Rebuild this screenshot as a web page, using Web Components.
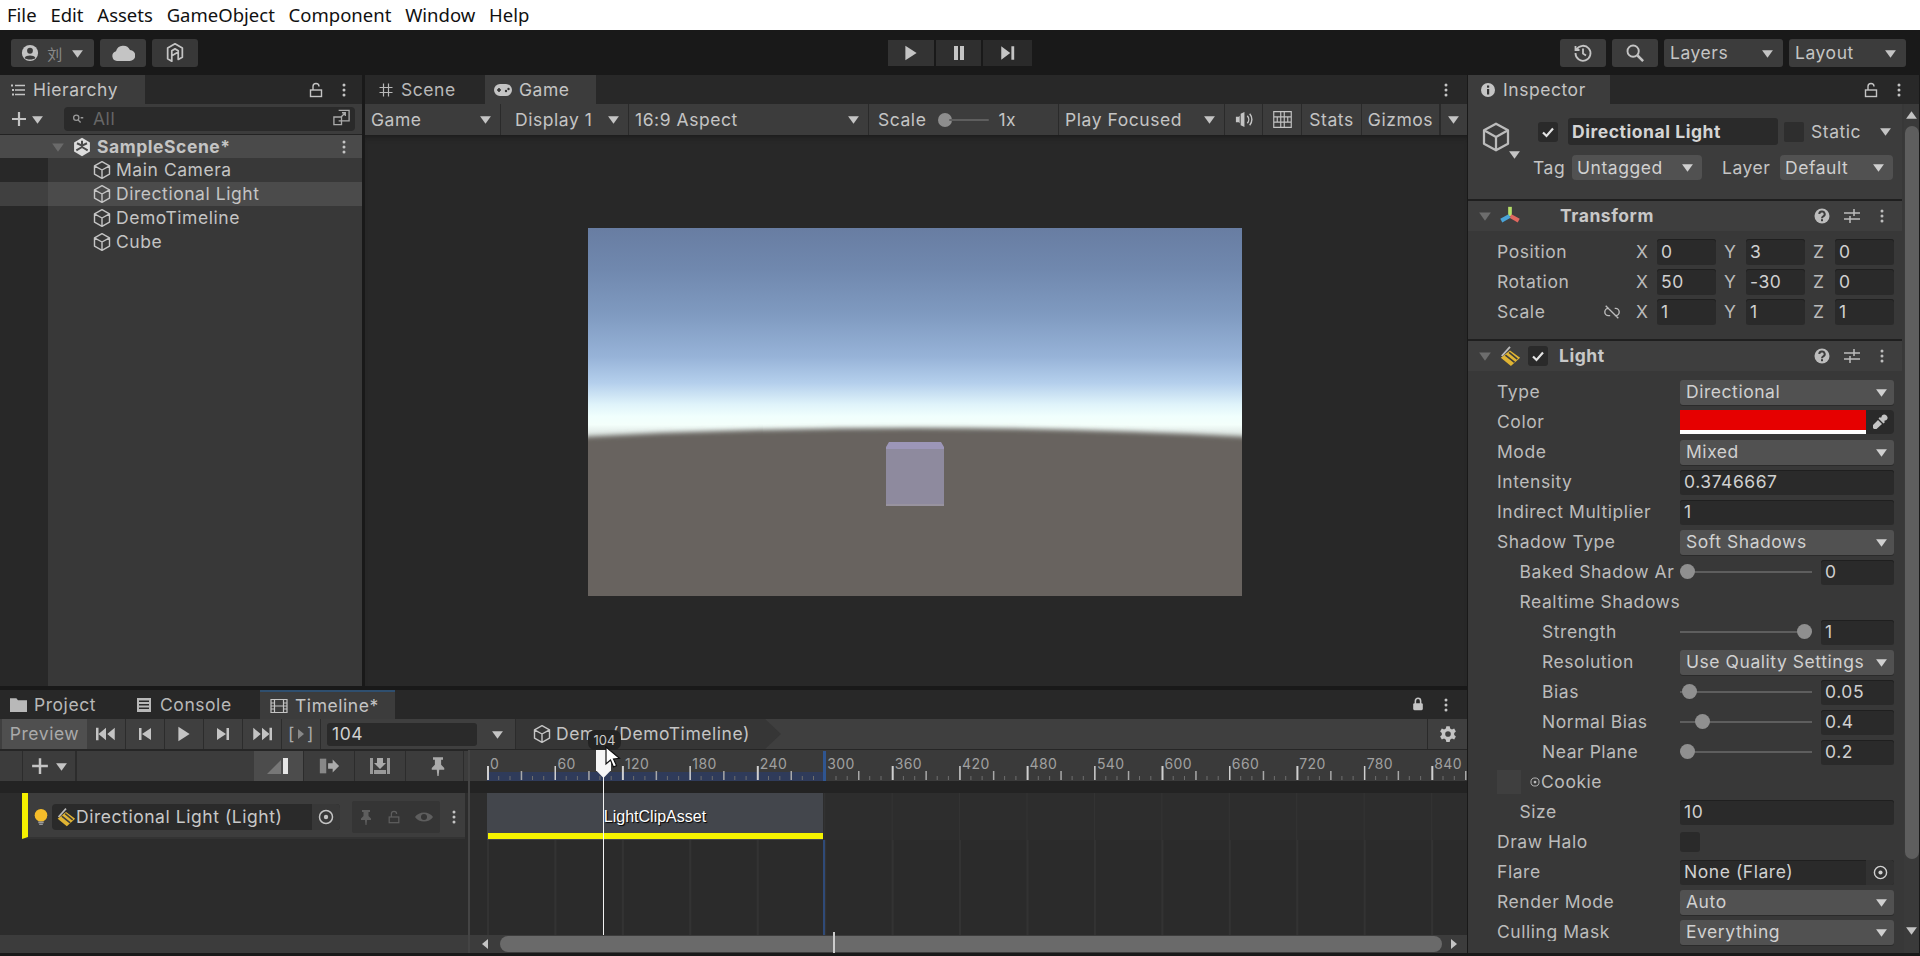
<!DOCTYPE html>
<html><head><meta charset="utf-8"><title>Unity</title>
<style>
html,body{margin:0;padding:0;background:#191919;width:1920px;height:956px;overflow:hidden}
body{font:17.500px/1 Inter,"Noto Sans CJK SC",sans-serif;color:#c4c4c4;letter-spacing:.55px}
</style></head><body>
<u-menu></u-menu>
<u-top></u-top>
<u-work></u-work>
<script>
const S=(w,b,o='')=>`<svg xmlns="http://www.w3.org/2000/svg" viewBox="0 0 ${w} ${w}" width="100%" height="100%" ${o}>${b}</svg>`;
const T='fill="none" stroke="currentColor"';
const F='fill="currentColor"';
const ICONS={
 list:S(16,`<path ${T} stroke-width="1.3" d="M5 3.500h10M5 8h10M5 12.500h10"/><path ${F} d="M1 2.500h2v2H1zM2 7h2v2H2zM2 11.500h2v2H2z"/>`),
 lockopen:S(16,`<rect x="2.500" y="8" width="11" height="6.500" ${T} stroke-width="1.400"/><path ${T} stroke-width="1.400" d="M5 8V4.500a3 3 0 0 1 6 0"/>`),
 lock:S(16,`<rect x="2.500" y="7" width="11" height="8" rx="1.500" ${F}/><path ${T} stroke-width="1.800" d="M5 8V4.500a3 3 0 0 1 6 0V8"/>`),
 dots:S(16,`<g ${F}><circle cx="8" cy="3" r="1.500"/><circle cx="8" cy="8" r="1.500"/><circle cx="8" cy="13" r="1.500"/></g>`),
 hash:S(16,`<path ${T} stroke-width="1.200" d="M5.500 1.500v13M10.500 1.500v13M1.500 5.500h13M1.500 10.500h13"/>`),
 pad:S(20,`<rect x="1" y="4" width="18" height="12" rx="6" ${F}/><path stroke="#333" stroke-width="1.600" d="M4 10h4M6 8v4"/><circle cx="13" cy="11" r="1.200" fill="#333"/><circle cx="15.500" cy="9" r="1.200" fill="#333"/>`),
 info:S(16,`<circle cx="8" cy="8" r="7" ${F}/><rect x="7" y="7" width="2.200" height="5.500" fill="#333"/><rect x="7" y="3.500" width="2.200" height="2.200" fill="#333"/>`),
 folder:S(16,`<path ${F} d="M0 2h6l1.500 2H16v11H0z"/>`),
 doc:S(16,`<path ${F} fill-rule="evenodd" d="M1 1h14v14H1zM3 3.500v1.500h10V3.500zM3 7v1.500h10V7zM3 10.500V12h10v-1.500z"/>`),
 film:S(18,`<path ${T} stroke-width="1.200" d="M1 2.500h16v13H1zM4.500 2.500v13M13.500 2.500v13M1 6h3.500M1 9h3.500M1 12h3.500M13.500 6H17M13.500 9H17M13.500 12H17M4.500 9h9"/>`),
 cube:S(24,`<path ${T} stroke-width="1.700" stroke-linejoin="round" d="M12 2l9 5v10l-9 5-9-5V7zM3 7l9 5 9-5M12 12v10"/>`),
 search:S(16,`<circle cx="6.500" cy="6.500" r="4.500" ${T} stroke-width="1.500"/><path ${T} stroke-width="2" d="M10 10l4.500 4.500"/>`),
 searchs:S(16,`<circle cx="6" cy="6.500" r="3" ${T} stroke-width="1.500"/><path ${T} stroke-width="1.600" d="M8 9l3 3M11 6.500h3"/>`),
 ssearch:S(20,`<path ${T} stroke-width="1.400" d="M7 2.500h11v11H7M2 9.500h8v8H2zM9 10l5-5M10.500 5H14v3.500"/>`),
 unity:S(24,`<path ${F} d="M12 1l9.500 5.500v11L12 23l-9.500-5.500v-11z"/><path stroke="#4a4a4a" stroke-width="2.400" fill="none" d="M12 12V4.500M12 12l-6.800 4M12 12l6.800 4M6 7.500l6 3 6-3"/>`),
 user:S(20,`<circle cx="10" cy="10" r="9" ${F}/><circle cx="10" cy="7.500" r="3.200" fill="#3c3c3c"/><path fill="#3c3c3c" d="M4 15.500c1.500-3.500 10.500-3.500 12 0-2 2.200-10 2.200-12 0z"/>`),
 cloud:S(24,`<path ${F} d="M6 20a5 5 0 0 1-1-9.800A7.500 7.500 0 0 1 19 9a5.500 5.500 0 0 1-.5 11z"/>`),
 plastic:S(24,`<path ${T} stroke-width="1.900" stroke-linejoin="round" d="M12 2l8 4.600v10L15.500 19V9.500L12 7.500 8.500 9.500V21L4 18.400V6.600zM8.500 15l7-4"/>`),
 history:S(20,`<path ${T} stroke-width="1.800" d="M3.500 6.500A7.500 7.500 0 1 1 2.500 10M2.500 3v4h4M10 5.500V10.500l3 2"/>`),
 play:S(16,`<path ${F} d="M3 1.500l10 6.500-10 6.500z"/>`),
 pause:S(16,`<path ${F} d="M3 1h4v14H3zM9 1h4v14H9z"/>`),
 step:S(16,`<path ${F} d="M2 2l8 6-8 6zM11 2h2.500v12H11z"/>`),
 first:S(16,`<path ${F} d="M0 3h2v10H0zM8 3v10L2 8zM15 3v10L9 8z"/>`),
 prev:S(16,`<path ${F} d="M2 2h2.500v12H2zM14 2v12L5 8z"/>`),
 next:S(16,`<path ${F} d="M2 2l9 6-9 6zM11.500 2H14v12h-2.500z"/>`),
 last:S(16,`<path ${F} d="M1 3l6 5-6 5zM8 3l6 5-6 5zM14 3h2v10h-2z"/>`),
 gear:S(16,`<path ${F} fill-rule="evenodd" d="M6.500 1h3l.4 2 1.600.9 2-.7 1.500 2.600-1.500 1.300v1.800l1.500 1.300-1.500 2.600-2-.7-1.600.9-.4 2h-3l-.4-2-1.600-.9-2 .7L1 10.200l1.500-1.300V7.100L1 5.800l1.500-2.600 2 .7 1.600-.9zM8 5.500a2.500 2.500 0 1 0 0 5 2.500 2.500 0 0 0 0-5z"/>`),
 help:S(16,`<circle cx="8" cy="8" r="7.500" ${F}/><path fill="none" stroke="#3e3e3e" stroke-width="2" d="M5.300 6a2.700 2.500 0 1 1 3.900 2.300C8.200 8.800 8 9.400 8 10.300"/><rect x="7" y="11.200" width="2" height="2" fill="#3e3e3e"/>`),
 sliders:S(16,`<path ${T} stroke-width="1.500" d="M0 5h16M0 11h16M10 1v7M6 8v7"/>`),
 target:S(16,`<circle cx="8" cy="8" r="6.500" ${T} stroke-width="1.500"/><circle cx="8" cy="8" r="2.200" ${F}/>`),
 dropper:S(16,`<path ${F} d="M10 1.500a2.300 2.300 0 0 1 4.500 4.500l-2.500 1 1 1-1.500 1.500-5-5L8 3l1 1zM6 6l4 4-5.500 5H2l-1 -1V11z"/>`),
 unlink:S(20,`<path ${T} stroke-width="1.500" d="M7 6H6a4 4 0 0 0 0 8h2M13 6h1a4 4 0 0 1 0 8h-1M3 3l14 14"/>`),
 bulb:S(20,`<circle cx="10" cy="8" r="7" fill="#f5bd2a"/><path fill="#9b9b9b" d="M7 15h6v2H7zM8 17.500h4V19H8z"/>`),
 pin:S(16,`<path ${F} d="M4 1h8v2h-1.500v4L13 9.500V11H9l-.5 5h-1L7 11H3V9.500L5.500 7V3H4z"/>`),
 eye:S(20,`<path ${F} d="M1 10c4-6 14-6 18 0-4 6-14 6-18 0z"/><circle cx="10" cy="10" r="3" fill="#353535"/>`),
 ramp:S(24,`<path fill="#777" d="M0 20L14 6v14z"/><rect x="16" y="4" width="5" height="16" fill="#e6e6e6"/>`),
 pushr:S(24,`<path fill="#888" d="M2 4h7v16H2z"/><path ${F} d="M11 9h5V5l7 7-7 7v-4h-5z"/>`),
 pushd:S(24,`<path fill="#999" d="M2 4h3v16H2zM19 4h3v16h-3zM6 16h12v4H6z"/><path ${F} d="M9 4h6v5h3l-6 6-6-6h3z"/>`),
 cursor:S(24,`<path fill="#fff" stroke="#111" stroke-width="1.200" d="M2 1l0 17 4.500-4 3 7 3-1.400-3-6.600 6-.6z"/>`),
 tri:S(12,`<path ${F} d="M1 3h10L6 10z"/>`),
 triu:S(12,`<path ${F} d="M1 9h10L6 2z"/>`),
 tril:S(12,`<path ${F} d="M9 1v10L3 6z"/>`),
 trir:S(12,`<path ${F} d="M3 1v10l6-5z"/>`),
 plus:S(16,`<path ${T} stroke-width="2.200" d="M8 1v14M1 8h14"/>`),
 transform:S(24,`<path stroke="#b6e06a" stroke-width="4" d="M12 12V2"/><path stroke="#e0675f" stroke-width="4.500" d="M12.500 12l9 5"/><path stroke="#4aa4d8" stroke-width="4.500" d="M11.500 12l-9 5"/>`),
 light:S(24,`<path fill="#e0b433" d="M12 6l11 8-10 9L2 14z"/><path stroke="#3c3c3c" stroke-width="1.800" d="M7 11l10 8M11 8l9 7.500"/><path stroke="#bcbcbc" stroke-width="2" d="M3 12l9-10"/>`),
 speaker:S(20,`<path ${F} d="M2 7h3l1 -1v8l-1-1H2zM7 4l4-2v16l-4-2z"/><path ${T} stroke-width="1.500" d="M14 6a6 6 0 0 1 0 8M16.500 4a9 9 0 0 1 0 12"/>`),
 keys:S(24,`<path ${T} stroke-width="1.300" d="M2 3h20v18H2zM2 9h20M2 15h20M6 9v6M10 3v18M14 3v18M18 9v6"/>`)
};
function def(name,css,html,init){
 customElements.define(name,class extends HTMLElement{
  constructor(){super();const r=this.attachShadow({mode:'open'});
   r.innerHTML=`<style>${css}</style>`+(typeof html==='function'?html(this):html);}
  connectedCallback(){if(init&&!this._i){this._i=1;init(this,this.shadowRoot)}}
 });
}
def('u-icon',':host{display:inline-block;flex:none;line-height:0;width:var(--s,16px);height:var(--s,16px)}svg{display:block}','',(e,r)=>{
 const s=e.getAttribute('s');if(s)e.style.setProperty('--s',s+'px');
 r.innerHTML+=ICONS[e.getAttribute('n')]||'';
});
const I=(n,s,st='')=>`<u-icon n="${n}" s="${s}" style="${st}"></u-icon>`;

def('u-menu',`:host{display:flex;height:30px;background:#fff;color:#111;font:18.500px/30px "Noto Sans",sans-serif;letter-spacing:0;padding-left:7px;box-sizing:border-box;gap:13.800px}span{display:block}`,
 ['File','Edit','Assets','GameObject','Component','Window','Help'].map(t=>`<span>${t}</span>`).join(''));

def('u-btn',`:host{display:flex;align-items:center;justify-content:center;gap:6px;height:28px;box-sizing:border-box;background:var(--bg,#3c3c3c);border-radius:3px;color:#c4c4c4;white-space:nowrap}::slotted(*){flex:none}`,'<slot></slot>');
def('u-top',`:host{display:flex;height:45px;align-items:flex-start;padding-top:9px;box-sizing:border-box;background:#191919}
 .a{display:flex;gap:6px;margin-left:11px}.p{display:flex;gap:2px;margin-left:690px;margin-top:1px}.r{display:flex;gap:6px;margin-left:528px}
 .dd{justify-content:space-between;padding:0 9px 0 6px}`,
 `<div class="a"><u-btn style="width:83px;gap:8px;color:#c4c4c4">${I('user',18)}<span style="font-size:15px;font-family:'Noto Sans CJK SC';color:#8a8a8a">刘</span>${I('tri',13)}</u-btn>
  <u-btn style="width:46px">${I('cloud',24)}</u-btn><u-btn style="width:46px;--bg:#383838">${I('plastic',22)}</u-btn></div>
  <div class="p"><u-btn style="width:46px;height:26px;--bg:#333;border-radius:0">${I('play',18)}</u-btn><u-btn style="width:45px;height:26px;--bg:#2f2f2f;border-radius:0">${I('pause',16)}</u-btn><u-btn style="width:49px;height:26px;--bg:#2a2a2a;border-radius:0">${I('step',18)}</u-btn></div>
  <div class="r"><u-btn style="width:46px">${I('history',20)}</u-btn><u-btn style="width:46px">${I('search',20)}</u-btn>
  <u-btn class="dd" style="width:119px"><span>Layers</span>${I('tri',13)}</u-btn><u-btn class="dd" style="width:117px"><span>Layout</span>${I('tri',13)}</u-btn></div>`);

def('u-tab',`:host{display:flex;align-items:center;gap:7px;height:29px;box-sizing:border-box;color:#b8b8b8;background:#282828;padding-left:10px}
 :host([on]){background:#3c3c3c;color:#c4c4c4}:host([blue]){border-top:2px solid #2f4f6f}`,'<slot></slot>');
def('u-strip',`:host{display:flex;height:29px;background:#282828;align-items:center}.end{margin-left:auto;display:flex;gap:12px;padding-right:10px;color:#c4c4c4}`,
 `<slot></slot><div class="end"><slot name="end"></slot></div>`);

def('u-hrow',`:host{display:flex;align-items:center;height:24px;background:linear-gradient(90deg,#282828 0 48px,#383838 48px);padding-left:92px;gap:4px;box-sizing:border-box}
 :host([sel]){background:linear-gradient(90deg,#404040 0 48px,#4b4b4b 48px)}`,'<slot></slot>');
def('u-hier',`:host{display:flex;flex-direction:column;width:362px;background:linear-gradient(90deg,#282828 0 48px,#383838 48px)}
 .tb{display:flex;align-items:center;height:31px;background:#3c3c3c;color:#c4c4c4;border-bottom:1px solid #232323;box-sizing:border-box;padding-left:11px}
 .s{display:flex;align-items:center;margin-left:20px;width:291px;height:24px;border-radius:4px;background:#2a2a2a;box-sizing:border-box;padding:0 4px 0 7px;color:#666;gap:8px}
 .sc{display:flex;align-items:center;height:23px;background:#4a4a4a;font-weight:700;gap:5px;color:#c4c4c4}`,
 `<u-strip><u-tab on style="width:145px">${I('list',16)}<span>Hierarchy</span></u-tab>
  <u-icon slot="end" n="lockopen" s="16"></u-icon><u-icon slot="end" n="dots" s="16"></u-icon></u-strip>
 <div class="tb">${I('plus',16)}<u-icon n="tri" s="13" style="margin-left:4px"></u-icon>
  <div class="s">${I('searchs',14,'color:#999')}<span style="flex:1">All</span><span style="color:#aaa">${I('ssearch',19)}</span></div></div>
 <div class="sc"><u-icon n="tri" s="14" style="margin-left:51px;color:#6a6a6a"></u-icon>${I('unity',20,'color:#ddd;margin-left:2px')}<span style="flex:1">SampleScene*</span>${I('dots',16,'margin-right:10px')}</div>
 <u-hrow>${I('cube',20)}<span>Main Camera</span></u-hrow>
 <u-hrow sel>${I('cube',20)}<span>Directional Light</span></u-hrow>
 <u-hrow>${I('cube',20)}<span>DemoTimeline</span></u-hrow>
 <u-hrow>${I('cube',20)}<span>Cube</span></u-hrow>`);

def('u-seg',`:host{display:flex;align-items:center;justify-content:space-between;height:100%;box-sizing:border-box;border-right:1px solid #2a2a2a;padding:0 8px 0 6px;white-space:nowrap;color:#c4c4c4;flex:none}`,'<slot></slot>');
def('u-gameview',`:host{display:block;width:654px;height:368px;flex:none}svg{display:block}`,
 `<svg width="654" height="368" viewBox="0 0 654 368"><defs>
 <linearGradient id="g" x1="0" y1="0" x2="0" y2="1">
 <stop offset="0" stop-color="#687da2"/><stop offset=".19" stop-color="#7088ae"/><stop offset=".4" stop-color="#7f9ac0"/><stop offset=".6" stop-color="#97b3d8"/><stop offset=".72" stop-color="#b4cfec"/><stop offset=".82" stop-color="#dff3fa"/><stop offset=".875" stop-color="#f0fffd"/><stop offset=".915" stop-color="#f4fffb"/><stop offset="1" stop-color="#c8cfcc"/></linearGradient>
 <radialGradient id="d" cx=".5" cy="0" r=".5"><stop offset="0" stop-color="#566a86" stop-opacity=".7"/><stop offset="1" stop-color="#566a86" stop-opacity="0"/></radialGradient>
 <filter id="b" x="-5%" y="-10%" width="110%" height="120%"><feGaussianBlur stdDeviation="0 2.500"/></filter></defs>
 <rect width="654" height="215" fill="url(#g)"/><ellipse cx="327" cy="0" rx="400" ry="110" fill="url(#d)"/>
 <path filter="url(#b)" fill="#68635e" d="M-40 211Q327 189 694 211V420H-40z"/>
 <path fill="#8e8a9e" d="M298 219h58v59h-58z"/><path fill="#9c96b8" d="M301 214h52l3 5v2h-58v-2z"/><path fill="#98939f" d="M298 276h58v2h-58z"/></svg>`);
def('u-game',`:host{display:flex;flex-direction:column;width:1102px}
 .tb{display:flex;align-items:center;height:31px;background:#3c3c3c;box-sizing:border-box;flex:none}
 .v{flex:1;background:#282828;display:flex;align-items:center;justify-content:center;padding:3px 2px 0 0;box-sizing:border-box;box-shadow:inset 0 6px 6px -5px #181818}
 .tr{width:40px;height:2px;background:#5e5e5e;border-radius:1px;margin-left:-3px}
 .k{width:14px;height:14px;border-radius:50%;background:#8d8d8d;margin-left:12px}`,
 `<u-strip><u-tab style="width:120px;padding-left:13px">${I('hash',16)}<span>Scene</span></u-tab><u-tab on style="width:111px;gap:6px;padding-left:8px">${I('pad',20)}<span>Game</span></u-tab>
  <u-icon slot="end" n="dots" s="16" style="margin-right:3px"></u-icon></u-strip>
 <div class="tb">
  <u-seg style="width:136px"><span>Game</span>${I('tri',13)}</u-seg>
  <u-seg style="width:128px;padding-left:14px"><span>Display 1</span>${I('tri',13)}</u-seg>
  <u-seg style="width:240px"><span>16:9 Aspect</span>${I('tri',13)}</u-seg>
  <u-seg style="width:190px;justify-content:flex-start;padding-left:9px"><span>Scale</span><i class="k"></i><i class="tr"></i><span style="margin-left:9px">1x</span></u-seg>
  <u-seg style="width:166px"><span>Play Focused</span>${I('tri',13)}</u-seg>
  <u-seg style="width:38px;padding:0;justify-content:center">${I('speaker',19)}</u-seg>
  <u-seg style="width:39px;padding:0;justify-content:center">${I('keys',21)}</u-seg>
  <u-seg style="width:60px;padding:0;justify-content:center"><span>Stats</span></u-seg>
  <u-seg style="width:78px;padding:0;justify-content:center"><span>Gizmos</span></u-seg>
  <u-seg style="width:26px;padding:0;justify-content:center;border:0;border-left:1px solid #2a2a2a">${I('tri',13)}</u-seg>
 </div>
 <div class="v"><u-gameview></u-gameview></div>`);

def('u-field',`:host{display:flex;align-items:center;justify-content:space-between;height:25px;box-sizing:border-box;border-radius:3px;white-space:nowrap;overflow:hidden;color:#d0d0d0}
 :host([k=in]){background:#2a2a2a;padding:0 4px;box-shadow:inset 0 1px 0 #1f1f1f}
 :host([k=dd]){background:#515151;padding:0 6px;box-shadow:0 1px 0 #2b2b2b}`,'<slot></slot>');
def('u-prop',`:host{display:flex;align-items:center;height:30px;box-sizing:border-box;padding-left:calc(29px + var(--ind,0)*22.500px);color:#bcbcbc}
 .l{flex:none;width:calc(183px - var(--ind,0)*22.500px);white-space:nowrap;overflow:hidden}.c{width:214px;flex:none;display:flex;align-items:center}
 .tr{position:relative;width:132px;height:2px;background:#5e5e5e;margin-right:9px;flex:none}
 .kn{position:absolute;top:-7px;width:15px;height:15px;border-radius:50%;background:#8f8f8f}
 u-field{flex:1}`,e=>{
  const a=n=>e.getAttribute(n);const ind=a('ind')||0;e.style.setProperty('--ind',ind);
  const k=a('k'),v=a('v')||'';let c='';
  if(k=='dd')c=`<u-field k="dd"><span>${v}</span>${I('tri',13)}</u-field>`;
  if(k=='in')c=`<u-field k="in"><span>${v}</span></u-field>`;
  if(k=='sl')c=`<div class="tr"><i class="kn" style="left:${a('p')}px"></i></div><u-field k="in"><span>${v}</span></u-field>`;
  if(k=='col')c=`<div style="width:186px;height:24px;background:linear-gradient(#e60000 0 20px,#fff 20px)"></div><div style="width:28px;height:24px;background:#2a2a2a;border-radius:0 4px 4px 0;display:flex;align-items:center;justify-content:center;color:#c4c4c4">${I('dropper',16)}</div>`;
  if(k=='chk')c=`<div style="width:20px;height:20px;background:#2a2a2a;border-radius:3px"></div>`;
  if(k=='obj')c=`<u-field k="in" style="padding-right:0"><span>${v}</span><span style="width:28px;height:25px;background:#323232;display:flex;align-items:center;justify-content:center">${I('target',15)}</span></u-field>`;
  return `<div class="l"><slot></slot></div>${k?`<div class="c">${c}</div>`:''}`;
 });
def('u-vec',`:host{display:flex;align-items:center;height:30px;padding-left:29px;box-sizing:border-box;color:#bcbcbc}
 .l{width:135px;flex:none;display:flex;justify-content:space-between;padding-right:11px;box-sizing:border-box;align-items:center}
 .x{flex:none;color:#bbb;padding-left:4px;box-sizing:border-box}
 u-field{width:59px;height:26px;flex:none}`,e=>{
  const [x,y,z]=e.getAttribute('v').split(',');
  return `<div class="l"><span>${e.getAttribute('l')}</span>${e.hasAttribute('link')?I('unlink',18):''}</div>
  <span class="x" style="width:25px">X</span><u-field k="in"><span>${x}</span></u-field>
  <span class="x" style="width:30px;padding-left:8px">Y</span><u-field k="in"><span>${y}</span></u-field>
  <span class="x" style="width:30px;padding-left:8px">Z</span><u-field k="in"><span>${z}</span></u-field>`;
 });
def('u-comp',`:host{display:flex;align-items:center;height:30px;background:#3e3e3e;border-top:2px solid #1f1f1f;box-sizing:content-box;font-weight:700;color:#c8c8c8;padding-right:12px;gap:0}
 .a{color:#6d6d6d;margin-left:10px}.e{margin-left:auto;display:flex;gap:14px;color:#bdbdbd}`,e=>`<u-icon n="tri" s="14" class="a"></u-icon><slot></slot><div class="e">${I('help',16)}${I('sliders',16)}${I('dots',16)}</div>`);
def('u-check',`:host{display:flex;align-items:center;justify-content:center;width:20px;height:20px;background:#2a2a2a;border-radius:3px;flex:none}svg{width:14px;height:14px}`,
 `<svg viewBox="0 0 14 14"><path fill="none" stroke="#e4e4e4" stroke-width="2.200" d="M2 7.500l3.500 3.500L12 3.500"/></svg>`);
def('u-inspector',`:host{display:flex;flex-direction:column;width:451px;margin-left:1px;height:878px}
 .m{display:flex;flex:1;min-height:0;background:#383838}.c{flex:1;min-width:0;padding-bottom:0}
 .sb{width:15px;margin-left:2px;background:#3a3a3a;display:flex;flex-direction:column;align-items:center;flex:none;color:#c4c4c4;box-sizing:border-box;padding-top:5px}
 .th{width:14px;height:733px;margin:4px 0 65px;border-radius:7px;background:#5e5e5e;flex:none}
 .h{height:95px;background:#3c3c3c;box-sizing:border-box;position:relative;padding:14px 0 0 12px}
 .h1,.h2{display:flex;align-items:center}.h1{height:27px}
 .nm{display:flex;align-items:center;width:210px;height:27px;background:#2a2a2a;border-radius:3px;margin-left:10px;padding-left:4px;box-sizing:border-box;font-weight:700;color:#d4d4d4;white-space:nowrap}
 .st{width:20px;height:20px;background:#2e2e2e;border-radius:2px;margin:0 7px 0 6px}
 .dd{display:flex;align-items:center;justify-content:space-between;height:25px;background:#515151;border-radius:4px;box-sizing:border-box;padding:0 8px 0 5px;color:#d0d0d0}`,
 `<u-strip style="background:#282828"><u-tab on style="width:142px;padding-left:12px;gap:7px">${I('info',16)}<span>Inspector</span></u-tab>
  <u-icon slot="end" n="lockopen" s="16"></u-icon><u-icon slot="end" n="dots" s="16" style="margin-right:2px"></u-icon></u-strip>
 <div class="m"><div class="c">
  <div class="h"><div class="h1">${I('cube',32,'color:#bcbcbc;margin-top:10px')}<u-check style="margin-left:26px"></u-check><div class="nm">Directional Light</div><div class="st"></div><span>Static</span>${I('tri',13,'margin-left:18px')}</div>
   <div class="h2" style="margin-top:10px"><u-icon n="tri" s="13" style="position:absolute;left:40px;top:44px"></u-icon><span style="margin-left:53px;width:33px">Tag</span><div class="dd" style="width:130px;margin-left:6px"><span>Untagged</span>${I('tri',13)}</div><span style="margin-left:20px;width:50px">Layer</span><div class="dd" style="width:113px;margin-left:8px"><span>Default</span>${I('tri',13)}</div></div></div>
  <u-comp>${I('transform',22,'margin-left:7px')}<span style="margin-left:39px">Transform</span></u-comp>
  <div style="padding-top:6px"><u-vec l="Position" v="0,3,0"></u-vec><u-vec l="Rotation" v="50,-30,0"></u-vec><u-vec l="Scale" v="1,1,1" link></u-vec></div><div style="height:12px"></div>
  <u-comp>${I('light',22,'margin-left:7px')}<u-check style="margin-left:7px"></u-check><span style="margin-left:11px">Light</span></u-comp>
  <div style="padding-top:6px">
  <u-prop k="dd" v="Directional">Type</u-prop><u-prop k="col">Color</u-prop><u-prop k="dd" v="Mixed">Mode</u-prop>
  <u-prop k="in" v="0.3746667">Intensity</u-prop><u-prop k="in" v="1">Indirect Multiplier</u-prop><u-prop k="dd" v="Soft Shadows">Shadow Type</u-prop>
  <u-prop ind="1" k="sl" p="0" v="0">Baked Shadow Ar</u-prop><u-prop ind="1">Realtime Shadows</u-prop>
  <u-prop ind="2" k="sl" p="117" v="1">Strength</u-prop><u-prop ind="2" k="dd" v="Use Quality Settings">Resolution</u-prop>
  <u-prop ind="2" k="sl" p="2" v="0.05">Bias</u-prop><u-prop ind="2" k="sl" p="15" v="0.4">Normal Bias</u-prop><u-prop ind="2" k="sl" p="0" v="0.2">Near Plane</u-prop>
  <u-cookie></u-cookie>
  <u-prop ind="1" k="in" v="10">Size</u-prop><u-prop k="chk">Draw Halo</u-prop><u-prop k="obj" v="None (Flare)">Flare</u-prop><u-prop k="dd" v="Auto">Render Mode</u-prop><u-prop k="dd" v="Everything">Culling Mask</u-prop></div>
 </div><div class="sb">${I('triu',13)}<div class="th"></div>${I('tri',13)}</div></div>`);
def('u-cookie',`:host{display:flex;align-items:center;height:30px;padding-left:29px;color:#bcbcbc}i{width:24px;height:24px;background:#3f3f3f;display:block}`,`<i></i>${I('target',10,'margin:0 1px 0 9px')}<span>Cookie</span>`);

def('u-tbtn',`:host{display:flex;align-items:center;justify-content:center;height:100%;width:39px;box-sizing:border-box;border-right:1px solid #2c2c2c;color:#c4c4c4;flex:none}`,'<slot></slot>');
def('u-ruler',`:host{display:block;position:relative;height:31px;background:#3a3a3a;overflow:hidden}
 svg{position:absolute;left:0;top:0}.lb{display:flex;padding-left:17px;position:relative;height:31px}
 .lb span{flex:none;width:67.450px;box-sizing:border-box;padding:7px 0 0 3px;font-size:14px;color:#a0a0a0;letter-spacing:.4px}`,e=>{
  let s='<rect x="17" y="22" width="337" height="9" fill="#2f3b5a"/>';
  for(let x=17,i=0;x<1000;x+=67.45/6,i++){
   const m=i%6==0,h=i%3==0;const y=m?16:h?21:26;
   s+=`<rect x="${x.toFixed(1)}" y="${y}" width="${m||h?(i%12==0?2:1.500):1}" height="${31-y-1}" fill="${m?'#cfcfcf':h?'#a8a8a8':'#6e6e6e'}"/>`;}
  s+='<rect x="353" y="1" width="3" height="30" fill="#2f5590"/>';
  let l='';for(let i=0;i<=14;i++)l+=`<span>${i*60}</span>`;
  return `<svg width="997" height="31">${s}</svg><div class="lb">${l}</div>`;
 });
def('u-timeline',`:host{display:flex;flex-direction:column;position:relative;height:266px;width:1467px;margin-top:4px;flex:none;background:#282828}
 .t1{display:flex;align-items:center;height:31px;background:#3f3f3f;border-bottom:1px solid #262626;box-sizing:border-box;flex:none}
 .pv{display:flex;align-items:center;justify-content:center;width:85px;height:100%;margin-left:2px;background:#4f4f4f;color:#aaa;flex:none}
 .in{display:flex;align-items:center;width:150px;height:23px;margin-left:6px;background:#2a2a2a;border-radius:3px;padding-left:5px;box-sizing:border-box;color:#d0d0d0}
 .crumb{display:flex;align-items:center;gap:4px;height:100%;width:265px;background:#363636;clip-path:polygon(0 0,94% 0,100% 50%,94% 100%,0 100%);padding-left:16px;box-sizing:border-box;color:#c4c4c4;flex:none;white-space:nowrap}
 .gear{margin-left:auto;width:40px;height:100%;border-left:1px solid #2a2a2a;display:flex;align-items:center;justify-content:center;color:#c4c4c4;box-sizing:border-box}
 .b{flex:1;display:flex;min-height:0}
 .left{width:468px;flex:none;border-right:2px solid #444;box-sizing:content-box;background:#2c2c2c;display:flex;flex-direction:column}
 .add{height:31px;background:#3c3c3c;display:flex;align-items:center;box-sizing:border-box;flex:none;border-top:1px solid #262626}
 .sep{width:1px;height:100%;background:#2c2c2c;flex:none}
 .band{height:12px;background:#232323;flex:none}
 .hd{height:46px;margin-left:22px;background:#3d3d3d;display:flex;align-items:center;flex:none;box-sizing:border-box;border-left:6px solid #f5f000;width:443px;border-bottom:2px solid #333;padding-top:3px}
 .ob{display:flex;align-items:center;width:288px;height:26px;background:#2a2a2a;border-radius:4px;box-sizing:border-box;white-space:nowrap;overflow:hidden;color:#c8c8c8;flex:none}
 .grp{display:flex;align-items:center;justify-content:space-around;width:88px;height:32px;background:#353535;margin-left:12px;color:#5e5e5e;border-radius:2px;flex:none}
 .r{flex:1;min-width:0;display:flex;flex-direction:column;background-color:#2b2b2b;background-image:linear-gradient(90deg,#333 2px,transparent 2px);background-size:67.450px 100%;background-position:17px 0}
 .tr{height:47px;background:#2d2d2d;display:flex;flex:none;padding-left:17px;background-image:linear-gradient(90deg,#333 1px,transparent 1px);background-size:67.450px 100%;background-position:17px 0}
 .clip{position:relative;width:336px;height:100%;background:#43464c;display:flex;flex-direction:column;align-items:center;box-sizing:border-box;color:#fff}
 .clip span{font:16px/1 "Liberation Sans",sans-serif;letter-spacing:0;margin-top:16px;text-shadow:1px 1px 1px #000}
 .clip i{position:absolute;left:1px;right:0;top:40px;height:6px;background:#f5f400}
 .end{flex:1;position:relative}.bar{position:absolute;left:353px;top:0;bottom:0;width:2px;background:#2f4a78}
 .sc{height:18px;display:flex;flex:none;align-items:center;background:#3c3c3c;position:relative}
 .sl{height:18px;background:#3c3c3c;flex:none}
 .th{position:absolute;left:30px;width:942px;height:16px;top:1px;background:#6a6a6a;border-radius:8px}
 .tick{position:absolute;left:363px;top:-3px;width:2px;height:21px;background:#ccc}
 .cl{height:3px;background:#191919;flex:none}
 .ph{position:absolute;left:603px;top:85px;width:1px;height:160px;background:#f2f2f2}
 .phh{position:absolute;left:596px;top:60px;width:15px;height:28px;background:#f6f6f6;clip-path:polygon(0 0,100% 0,100% 72%,50% 100%,0 72%)}
 .tip{position:absolute;left:588px;top:40px;width:33px;height:20px;border-radius:7px;background:#232323;color:#ccc;font-size:13px;display:flex;align-items:center;justify-content:center;letter-spacing:0}
 .cur{position:absolute;left:604px;top:56px}`,
 `<u-strip><u-tab style="width:130px;padding-left:10px">${I('folder',17)}<span>Project</span></u-tab><u-tab style="width:130px;padding-left:6px;gap:8px">${I('doc',16)}<span>Console</span></u-tab><u-tab on blue style="width:135px;padding-left:10px">${I('film',18)}<span>Timeline*</span></u-tab>
  <u-icon slot="end" n="lock" s="14" style="color:#c4c4c4;margin-right:1px"></u-icon><u-icon slot="end" n="dots" s="16" style="margin-right:3px"></u-icon></u-strip>
 <div class="t1"><div class="pv">Preview</div><u-tbtn>${I('first',20)}</u-tbtn><u-tbtn>${I('prev',16)}</u-tbtn><u-tbtn>${I('play',18)}</u-tbtn><u-tbtn>${I('next',16)}</u-tbtn><u-tbtn>${I('last',20)}</u-tbtn>
  <u-tbtn style="color:#aaa">[${I('trir',12,'color:#888')}]</u-tbtn><div class="in">104</div><u-tbtn style="width:39px;padding-left:2px">${I('tri',13)}</u-tbtn>
  <div class="crumb">${I('cube',20)}<span>Demo (DemoTimeline)</span></div><div class="gear">${I('gear',18)}</div></div>
 <div class="b"><div class="left"><div class="add"><i style="width:22px"></i><i class="sep"></i><u-tbtn style="width:53px">${I('plus',18)}${I('tri',13,'margin-left:6px')}</u-tbtn><i class="sep"></i>
   <u-tbtn style="width:50px;margin-left:177px;background:#4c4c4c;color:#bbb">${I('ramp',24)}</u-tbtn><u-tbtn style="width:51px;color:#aaa">${I('pushr',22)}</u-tbtn><u-tbtn style="width:51px;color:#aaa">${I('pushd',24)}</u-tbtn><u-tbtn style="width:52px;margin-left:6px;color:#aaa">${I('pin',20)}</u-tbtn></div>
   <div class="band"></div>
   <div class="hd"><u-icon n="bulb" s="18" style="margin:0 2px 0 4px"></u-icon><div class="ob">${I('light',20,'margin-left:4px')}<span style="flex:1">Directional Light (Light)</span><span style="width:28px;height:26px;background:#383838;display:flex;align-items:center;justify-content:center;color:#c4c4c4">${I('target',16)}</span></div>
     <div class="grp">${I('pin',16)}${I('lockopen',14)}${I('eye',20)}</div>${I('dots',16,'margin-left:6px')}</div>
   <div style="flex:1"></div>
   <div class="sl"></div></div>
  <div class="r"><u-ruler></u-ruler><div class="band"></div>
   <div class="tr"><div class="clip"><span>LightClipAsset</span><i></i></div></div>
   <div class="end"><div class="bar"></div></div>
   <div class="sc">${I('tril',12,'position:absolute;left:9px;color:#c4c4c4')}<div class="th"></div><div class="tick"></div>${I('trir',12,'position:absolute;left:978px;color:#c4c4c4')}</div></div></div>
 <div class="cl"></div>
 <div class="ph"></div><div class="phh"></div><div class="tip">104</div><div class="cur">${I('cursor',24)}</div>`);

def('u-work',`:host{display:flex;height:881px;background:#191919}
 .l{display:flex;flex-direction:column;width:1467px;flex:none}.u{display:flex;height:611px;flex:none;gap:3px}`,
 `<div class="l"><div class="u"><u-hier></u-hier><u-game></u-game></div><u-timeline></u-timeline></div><u-inspector></u-inspector>`);
</script>
</body></html>
